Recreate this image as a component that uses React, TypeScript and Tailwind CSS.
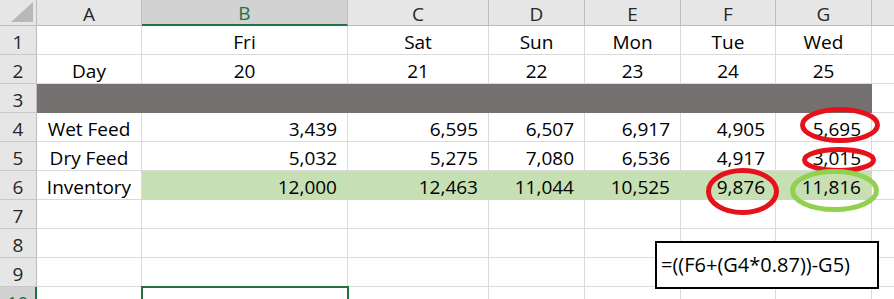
import clsx from 'clsx'

const COL_W = 'grid-cols-[37px_105px_206px_141px_96px_96px_95px_96px_96px]'
const LETTERS = ['A', 'B', 'C', 'D', 'E', 'F', 'G', '']

const DAYS = ['', 'Fri', 'Sat', 'Sun', 'Mon', 'Tue', 'Wed']
const DATES = ['Day', '20', '21', '22', '23', '24', '25']
const ROWS: { label: string; vals: string[]; fill?: boolean }[] = [
  { label: 'Wet Feed', vals: ['3,439', '6,595', '6,507', '6,917', '4,905', '5,695'] },
  { label: 'Dry Feed', vals: ['5,032', '5,275', '7,080', '6,536', '4,917', '3,015'] },
  { label: 'Inventory', vals: ['12,000', '12,463', '11,044', '10,525', '9,876', '11,816'], fill: true },
]

function RowHead({ n, sel }: { n: number; sel?: boolean }) {
  return (
    <div
      className={clsx(
        'h-[29px] pt-[4px] flex items-center justify-center border-b border-[#c8c8c8]',
        sel ? 'bg-[#d2d2d2] text-[#217346] border-r-2 border-r-[#217346]' : 'bg-[#e6e6e6] text-[#262626] border-r border-r-[#bdbdbd]'
      )}
    >
      {n}
    </div>
  )
}

function Cell({ children, className }: { children?: React.ReactNode; className?: string }) {
  return (
    <div className={clsx('h-[29px] pt-[4px] flex items-center border-r border-b border-[#dadada] whitespace-nowrap', className)}>
      {children}
    </div>
  )
}

export default function App() {
  return (
    <div className="relative w-[894px] h-[299px] overflow-hidden bg-white text-[19px] text-black font-['Open_Sans',sans-serif]">
      <div className={clsx('grid w-max', COL_W)}>
        {/* column headers */}
        <div className="h-[26px] bg-[#e6e6e6] border-r border-b border-[#bdbdbd] flex items-end justify-end pr-[3px] pb-[3px]">
          <svg width="22" height="20" viewBox="0 0 22 20">
            <polygon points="22,0 22,20 0,20" fill="#b8b8b8" />
          </svg>
        </div>
        {LETTERS.map((l, i) =>
          l === 'B' ? (
            <div key={i} className="h-[26px] pt-[3px] bg-[#d2d2d2] border-r border-[#bdbdbd] border-b-2 border-b-[#217346] text-[#217346] flex items-center justify-center">
              {l}
            </div>
          ) : (
            <div key={i} className="h-[26px] pt-[3px] bg-[#e6e6e6] border-r border-b border-[#bdbdbd] text-[#262626] flex items-center justify-center">
              {l}
            </div>
          )
        )}

        {/* row 1 */}
        <RowHead n={1} />
        {DAYS.map((d, i) => <Cell key={i} className="justify-center">{d}</Cell>)}
        <Cell />

        {/* row 2 */}
        <RowHead n={2} />
        {DATES.map((d, i) => <Cell key={i} className="justify-center">{d}</Cell>)}
        <Cell />

        {/* row 3 */}
        <RowHead n={3} />
        {DATES.map((_, i) => <Cell key={i} className="bg-[#767171] border-r-[#767171] border-b-[#767171]" />)}
        <Cell />

        {/* rows 4-6 */}
        {ROWS.map((r, ri) => (
          <div key={r.label} className="contents">
            <RowHead n={ri + 4} />
            <Cell className="justify-center">{r.label}</Cell>
            {r.vals.map((v, i) => (
              <Cell key={i} className={clsx('justify-end pr-[10px]', r.fill && 'bg-[#c6e0b4] border-r-[#c6e0b4] border-b-[#c6e0b4]')}>
                {v}
              </Cell>
            ))}
            <Cell />
          </div>
        ))}

        {/* rows 7-10 */}
        {[7, 8, 9, 10].map(n => (
          <div key={n} className="contents">
            <RowHead n={n} sel={n === 10} />
            {LETTERS.map((l, i) => (
              <Cell key={i} className="relative">
                {n === 10 && l === 'B' && (
                  <span className="absolute -left-px -top-px w-[208px] h-[31px] border-2 border-[#217346]" />
                )}
              </Cell>
            ))}
          </div>
        ))}
      </div>

      {/* annotations */}
      <svg className="absolute inset-0 pointer-events-none" width="894" height="299" viewBox="0 0 894 299">
        <g fill="none" strokeWidth="5">
          <ellipse cx="840" cy="125" rx="37.5" ry="15.5" stroke="#e5121b" />
          <ellipse cx="839" cy="160" rx="34.5" ry="10.5" stroke="#e5121b" />
          <ellipse cx="742.5" cy="191.5" rx="34" ry="21" stroke="#e5121b" />
          <ellipse cx="834.5" cy="190.5" rx="42" ry="19" stroke="#92d050" />
        </g>
      </svg>

      <div className="absolute left-[655px] top-[241px] w-[224px] h-[48px] border-[2.5px] border-black bg-white flex items-center pl-[4px] text-[20px] whitespace-nowrap">
        =((F6+(G4*0.87))-G5)
      </div>
    </div>
  )
}
